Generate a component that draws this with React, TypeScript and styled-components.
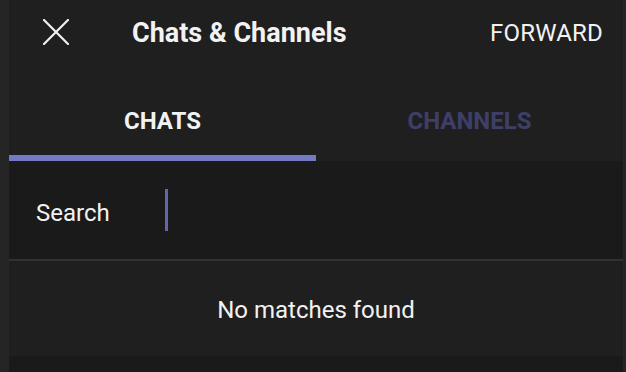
import styled, { createGlobalStyle } from "styled-components";

const GlobalStyle = createGlobalStyle`
  html, body {
    margin: 0;
    padding: 0;
    background: #252525;
  }
  body {
    font-family: Roboto, "Noto Sans", sans-serif;
    color: #f2f2f2;
  }
`;

const CloseIcon = () => (
  <svg width="26" height="26" viewBox="0 0 26 26" fill="none">
    <path d="M1 1L25 25M25 1L1 25" stroke="#f2f2f2" strokeWidth="2.2" strokeLinecap="round" />
  </svg>
);

export default function App() {
  return (
    <>
      <GlobalStyle />
      <Screen>
        <Rail />
        <Panel>
          <Header>
            <CloseButton>
              <CloseIcon />
            </CloseButton>
            <Title>Chats &amp; Channels</Title>
            <ForwardButton>FORWARD</ForwardButton>
          </Header>
          <TabBar>
            <Tab $active>
              <TabLabel $active>CHATS</TabLabel>
              <TabLine $active />
            </Tab>
            <Tab>
              <TabLabel>CHANNELS</TabLabel>
              <TabLine />
            </Tab>
          </TabBar>
          <SearchRow>
            <SearchLabel>Search</SearchLabel>
            <Caret />
          </SearchRow>
          <EmptyRow>No matches found</EmptyRow>
          <Rest />
        </Panel>
        <EdgeRail />
      </Screen>
    </>
  );
}

const Screen = styled.div`
  display: flex;
  width: 626px;
  height: 372px;
  overflow: hidden;
  background: #252525;
`;

const Rail = styled.div`
  width: 9px;
  flex-shrink: 0;
`;

const EdgeRail = styled.div`
  width: 3px;
  flex-shrink: 0;
`;

const Panel = styled.div`
  flex: 1;
  display: flex;
  flex-direction: column;
  background: #201f1f;
`;

const Header = styled.div`
  height: 64px;
  display: flex;
  align-items: center;
  padding: 0 20px 0 34px;
`;

const CloseButton = styled.div`
  width: 26px;
  height: 26px;
  display: flex;
  margin-top: -1px;
`;

const Title = styled.div`
  margin-left: 63px;
  font-size: 27px;
  font-weight: 700;
  line-height: 32px;
  color: #f2f2f2;
  flex: 1;
  margin-top: 2px;
`;

const ForwardButton = styled.div`
  font-size: 24px;
  line-height: 28px;
  letter-spacing: 0.2px;
  color: #f2f2f2;
  margin-top: 1px;
`;

const TabBar = styled.div`
  display: flex;
  height: 97px;
`;

const Tab = styled.div<{ $active?: boolean }>`
  flex: 1;
  display: flex;
  flex-direction: column;
  align-items: center;
  padding-top: 45px;
`;

const TabLabel = styled.div<{ $active?: boolean }>`
  height: 24px;
  line-height: 24px;
  font-size: 24px;
  font-weight: 700;
  color: ${(p) => (p.$active ? "#f2f2f2" : "#3e3f68")};
`;

const TabLine = styled.div<{ $active?: boolean }>`
  margin-top: auto;
  align-self: stretch;
  height: 6px;
  background: ${(p) => (p.$active ? "#7479c3" : "transparent")};
`;

const SearchRow = styled.div`
  height: 98px;
  display: flex;
  align-items: center;
  padding-left: 27px;
  background: #1b1a1a;
  border-bottom: 2px solid #323131;
`;

const SearchLabel = styled.div`
  width: 129px;
  font-size: 24px;
  line-height: 28px;
  padding-top: 5px;
  color: #f2f2f2;
`;

const Caret = styled.div`
  width: 3px;
  height: 42px;
  background: #6466ad;
`;

const EmptyRow = styled.div`
  height: 95px;
  display: flex;
  align-items: center;
  justify-content: center;
  padding-top: 3px;
  box-sizing: border-box;
  font-size: 24px;
  color: #f2f2f2;
`;

const Rest = styled.div`
  flex: 1;
  background: #1b1a1a;
`;
